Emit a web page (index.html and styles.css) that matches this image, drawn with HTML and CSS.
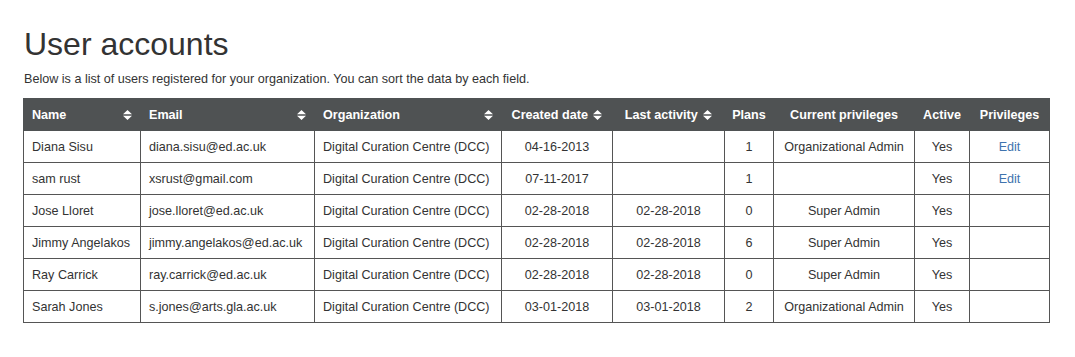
FILE: index.html
```html
<!DOCTYPE html>
<html lang="en">
<head>
<meta charset="utf-8">
<title>User accounts</title>
<link rel="stylesheet" href="styles.css">
</head>
<body>
<main class="page">
  <h1 class="title">User accounts</h1>
  <p class="intro">Below is a list of users registered for your organization. You can sort the data by each field.</p>
  <table class="users">
    <colgroup>
      <col class="c-name"><col class="c-email"><col class="c-org"><col class="c-created"><col class="c-last"><col class="c-plans"><col class="c-priv"><col class="c-active"><col class="c-edit">
    </colgroup>
    <thead>
      <tr>
        <th class="sortable"><span class="th-inner"><span>Name</span><svg class="sort" viewBox="0 0 9 10" width="9" height="10"><path d="M0 4.3 L4.5 0 L9 4.3 Z M0 5.7 L9 5.7 L4.5 10 Z"/></svg></span></th>
        <th class="sortable"><span class="th-inner"><span>Email</span><svg class="sort" viewBox="0 0 9 10" width="9" height="10"><path d="M0 4.3 L4.5 0 L9 4.3 Z M0 5.7 L9 5.7 L4.5 10 Z"/></svg></span></th>
        <th class="sortable"><span class="th-inner"><span>Organization</span><svg class="sort" viewBox="0 0 9 10" width="9" height="10"><path d="M0 4.3 L4.5 0 L9 4.3 Z M0 5.7 L9 5.7 L4.5 10 Z"/></svg></span></th>
        <th class="center">Created date <svg class="sort inline" viewBox="0 0 9 10" width="9" height="10"><path d="M0 4.3 L4.5 0 L9 4.3 Z M0 5.7 L9 5.7 L4.5 10 Z"/></svg></th>
        <th class="center">Last activity <svg class="sort inline" viewBox="0 0 9 10" width="9" height="10"><path d="M0 4.3 L4.5 0 L9 4.3 Z M0 5.7 L9 5.7 L4.5 10 Z"/></svg></th>
        <th class="center">Plans</th>
        <th class="center">Current privileges</th>
        <th class="center">Active</th>
        <th class="center">Privileges</th>
      </tr>
    </thead>
    <tbody>
      <tr><td>Diana Sisu</td><td>diana.sisu@ed.ac.uk</td><td>Digital Curation Centre (DCC)</td><td class="center">04-16-2013</td><td class="center"></td><td class="center">1</td><td class="center">Organizational Admin</td><td class="center">Yes</td><td class="center"><a class="edit" href="#">Edit</a></td></tr>
      <tr><td>sam rust</td><td>xsrust@gmail.com</td><td>Digital Curation Centre (DCC)</td><td class="center">07-11-2017</td><td class="center"></td><td class="center">1</td><td class="center"></td><td class="center">Yes</td><td class="center"><a class="edit" href="#">Edit</a></td></tr>
      <tr><td>Jose Lloret</td><td>jose.lloret@ed.ac.uk</td><td>Digital Curation Centre (DCC)</td><td class="center">02-28-2018</td><td class="center">02-28-2018</td><td class="center">0</td><td class="center">Super Admin</td><td class="center">Yes</td><td class="center"></td></tr>
      <tr><td>Jimmy Angelakos</td><td>jimmy.angelakos@ed.ac.uk</td><td>Digital Curation Centre (DCC)</td><td class="center">02-28-2018</td><td class="center">02-28-2018</td><td class="center">6</td><td class="center">Super Admin</td><td class="center">Yes</td><td class="center"></td></tr>
      <tr><td>Ray Carrick</td><td>ray.carrick@ed.ac.uk</td><td>Digital Curation Centre (DCC)</td><td class="center">02-28-2018</td><td class="center">02-28-2018</td><td class="center">0</td><td class="center">Super Admin</td><td class="center">Yes</td><td class="center"></td></tr>
      <tr><td>Sarah Jones</td><td>s.jones@arts.gla.ac.uk</td><td>Digital Curation Centre (DCC)</td><td class="center">03-01-2018</td><td class="center">03-01-2018</td><td class="center">2</td><td class="center">Organizational Admin</td><td class="center">Yes</td><td class="center"></td></tr>
    </tbody>
  </table>
</main>
</body>
</html>
```

FILE: styles.css
```css
html, body {
  margin: 0;
  background: #ffffff;
}

body {
  font-family: "Liberation Sans", Arial, Helvetica, sans-serif;
  color: #333333;
}

.page {
  padding: 0 0 0 23px;
}

.title {
  margin: 27px 0 8px 1px;
  font-size: 32px;
  line-height: 1.1;
  font-weight: 400;
  color: #333333;
}

.intro {
  margin: 0 0 10px 1px;
  font-size: 12.6px;
  line-height: 18px;
}

.users {
  border-collapse: collapse;
  table-layout: fixed;
  width: 1026px;
  font-size: 12.6px;
  border: 1px solid #555555;
}

.c-name { width: 117px; }
.c-email { width: 174px; }
.c-org { width: 187px; }
.c-created { width: 111px; }
.c-last { width: 112px; }
.c-plans { width: 49px; }
.c-priv { width: 141px; }
.c-active { width: 55px; }
.c-edit { width: 80px; }

.users th {
  background: #4f5253;
  color: #ffffff;
  font-weight: 700;
  height: 31px;
  padding: 0 8px;
  text-align: left;
  border: 1px solid #4f5253;
  white-space: nowrap;
}

.users th.center {
  text-align: center;
  padding: 0 4px;
}

.th-inner {
  display: flex;
  align-items: center;
  justify-content: space-between;
}

.sort {
  display: block;
  fill: #ffffff;
}

.sort.inline {
  display: inline-block;
  vertical-align: -1px;
  margin-left: 2px;
}

.users td {
  height: 31px;
  padding: 0 8px;
  border: 1px solid #555555;
  white-space: nowrap;
}

.users td.center {
  text-align: center;
}

.edit {
  color: #3f73ae;
  text-decoration: none;
}
```
